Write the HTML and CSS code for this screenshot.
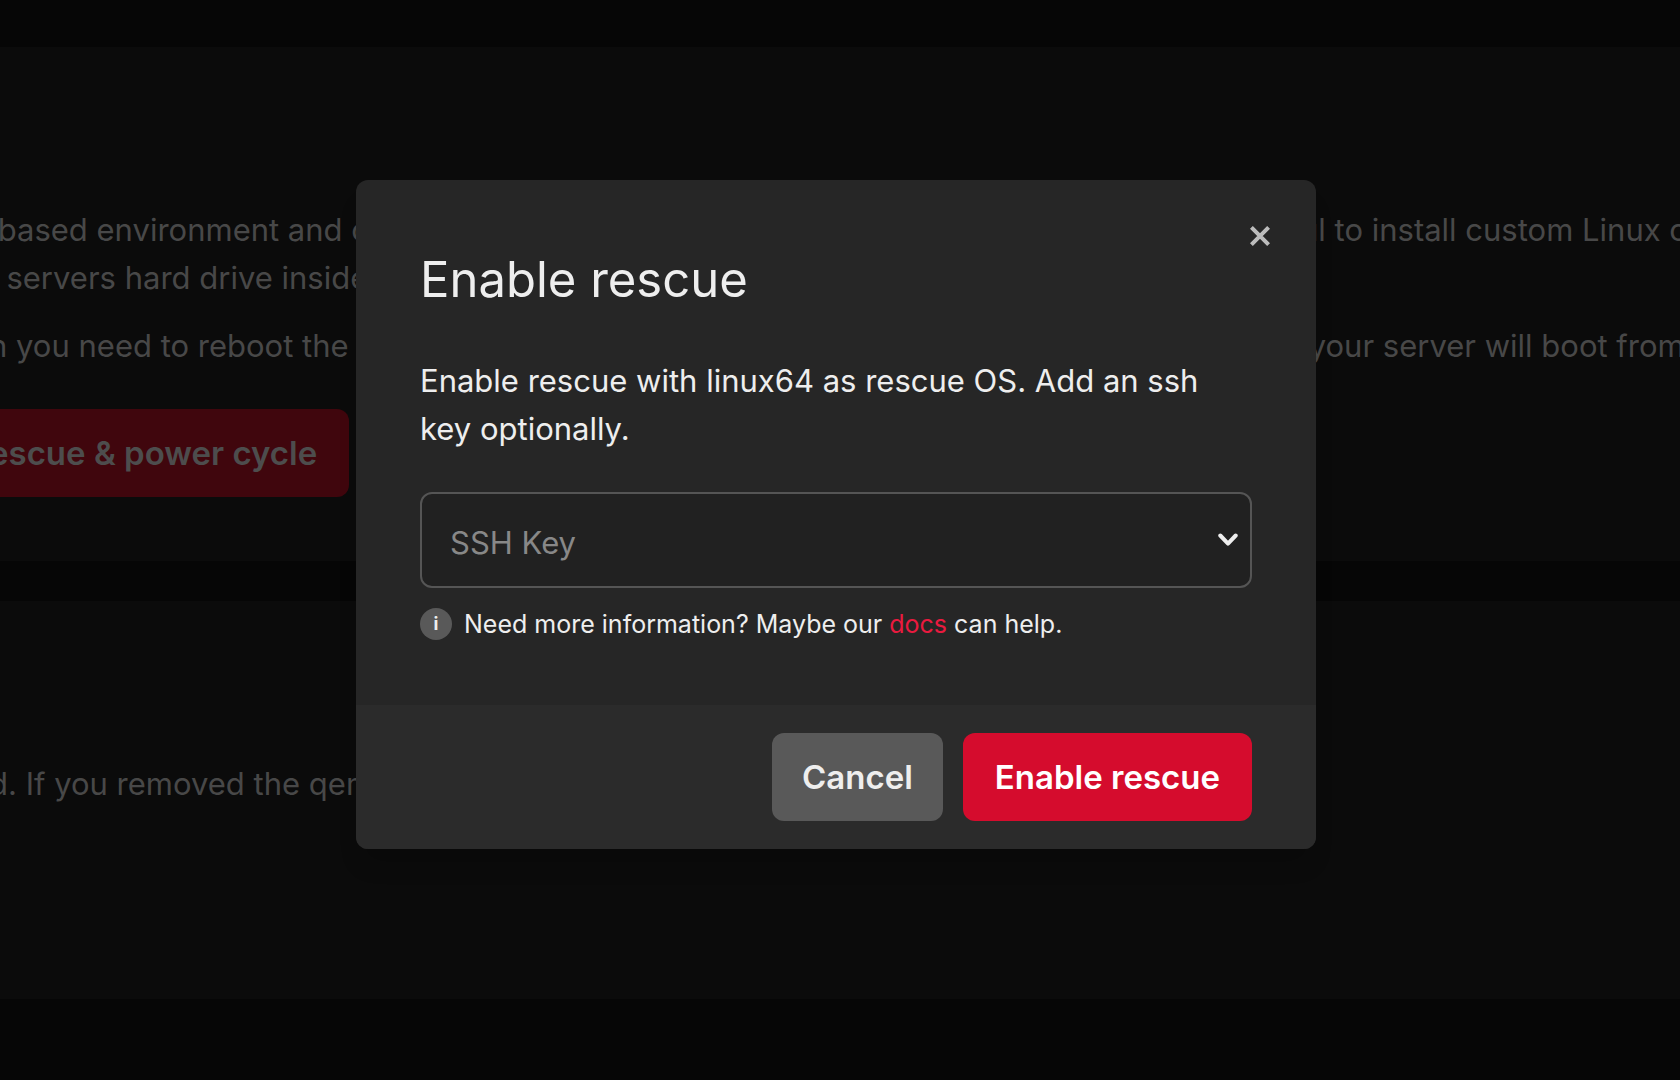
FILE: index.html
```html
<!DOCTYPE html>
<html lang="en">
<head>
<meta charset="utf-8">
<meta name="viewport" content="width=device-width, initial-scale=1">
<title>Enable rescue</title>
<link rel="stylesheet" href="styles.css">
</head>
<body>
<main class="page">
  <section class="panel panel-rescue">
    <div class="copy">
      <p class="line"><span>&nbsp;based environment and c</span><span class="line-end">ul to install custom Linux o</span></p>
      <p class="line"><span>&nbsp;&nbsp;servers hard drive inside</span></p>
    </div>
    <div class="copy">
      <p class="line"><span>n you need to reboot the</span><span class="line-end">&nbsp;your server will boot from</span></p>
    </div>
    <button class="button button-page" type="button">escue &amp; power cycle</button>
  </section>
  <section class="panel panel-agent">
    <div class="copy">
      <p class="line"><span>d. If you removed the qem</span></p>
    </div>
  </section>
</main>

<div class="overlay">
  <div class="modal" role="dialog" aria-modal="true" aria-labelledby="modal-title">
    <div class="modal-body">
      <button class="close" type="button" aria-label="Close">
        <svg width="20" height="20" viewBox="0 0 20 20" fill="none" stroke="currentColor" stroke-width="4"><path d="M1.4 1.4 18.6 18.6M18.6 1.4 1.4 18.6"/></svg>
      </button>
      <h1 class="title" id="modal-title">Enable rescue</h1>
      <p class="intro">Enable rescue with linux64 as rescue OS. Add an ssh key optionally.</p>
      <div class="field">
        <select class="select" aria-label="SSH Key"><option>SSH Key</option></select>
        <svg class="chevron" width="20" height="14" viewBox="0 0 20 14" fill="none" stroke="currentColor" stroke-width="4" stroke-linecap="round" stroke-linejoin="round"><path d="M2.3 2.5 10 10.6 17.7 2.5"/></svg>
      </div>
      <p class="hint">
        <span class="info">i</span>
        <span>Need more information? Maybe our <a class="link" href="#docs">docs</a> can help.</span>
      </p>
    </div>
    <div class="modal-footer">
      <button class="button button-cancel" type="button">Cancel</button>
      <button class="button button-primary" type="button">Enable rescue</button>
    </div>
  </div>
</div>
</body>
</html>
```
FILE: styles.css
```css
* {
  box-sizing: border-box;
}

body {
  margin: 0;
  background: #060606;
  color: #eeeeee;
  font: 400 31px/48px Inter, "Liberation Sans", sans-serif;
  overflow: hidden;
}

h1,
p {
  margin: 0;
}

.page {
  display: flex;
  flex-direction: column;
  gap: 40px;
  min-height: 100vh;
  padding-top: 47px;
  overflow: hidden;
}

.panel {
  background: #0b0b0b;
  color: #484848;
}

.panel-rescue {
  padding: 159px 0 64px;
}

.panel-agent {
  padding: 159px 0 191px;
}

.copy {
  margin-left: -11px;
  margin-bottom: 20px;
}

.panel-agent .copy {
  margin-bottom: 0;
}

.line {
  display: flex;
  justify-content: space-between;
  white-space: nowrap;
}

.line-end {
  flex: 0 0 380px;
  min-width: 0;
}

.button {
  height: 88px;
  padding: 0 32px;
  border: 0;
  border-radius: 12px;
  font: 600 33px/40px Inter, "Liberation Sans", sans-serif;
}

.button-page {
  display: block;
  margin: 39px 0 0 -11px;
  padding-left: 0;
  background: #40060d;
  color: #4d4d4d;
}

.overlay {
  position: absolute;
  inset: 0;
  display: flex;
  justify-content: center;
  align-items: flex-start;
  padding: 180px 8px 0 0;
}

.modal {
  width: 960px;
  border-radius: 12px;
  background: #262626;
  box-shadow: 0 20px 24px -8px rgba(0, 0, 0, 0.2);
  overflow: hidden;
}

.modal-body {
  position: relative;
  padding: 72px 64px 65px;
}

.close {
  position: absolute;
  top: 36px;
  right: 36px;
  display: flex;
  padding: 10px;
  border: 0;
  background: none;
  color: #bbbbbb;
}

.title {
  margin-bottom: 49px;
  font-size: 49px;
  font-weight: 400;
  line-height: 56px;
}

.intro {
  margin-bottom: 39px;
}

.field {
  position: relative;
}

.select {
  display: block;
  width: 100%;
  height: 96px;
  padding: 6px 60px 0 28px;
  border: 2px solid #555555;
  border-radius: 12px;
  appearance: none;
  background: #212121;
  color: #888888;
  font: inherit;
}

.chevron {
  position: absolute;
  top: 41px;
  right: 14px;
  pointer-events: none;
}

.hint {
  display: flex;
  align-items: center;
  gap: 12px;
  margin-top: 20px;
  font-size: 25px;
  line-height: 32px;
}

.info {
  width: 32px;
  height: 32px;
  border-radius: 50%;
  background: #595959;
  font-size: 18px;
  font-weight: 700;
  text-align: center;
}

.link {
  color: #ea1a3f;
  text-decoration: none;
}

.modal-footer {
  display: flex;
  justify-content: flex-end;
  gap: 20px;
  padding: 28px 64px;
  background: #2b2b2b;
}

.button-cancel {
  padding: 0 30px;
  background: #595959;
  color: #eeeeee;
}

.button-primary {
  background: #d50c2d;
  color: #ffffff;
}
```
